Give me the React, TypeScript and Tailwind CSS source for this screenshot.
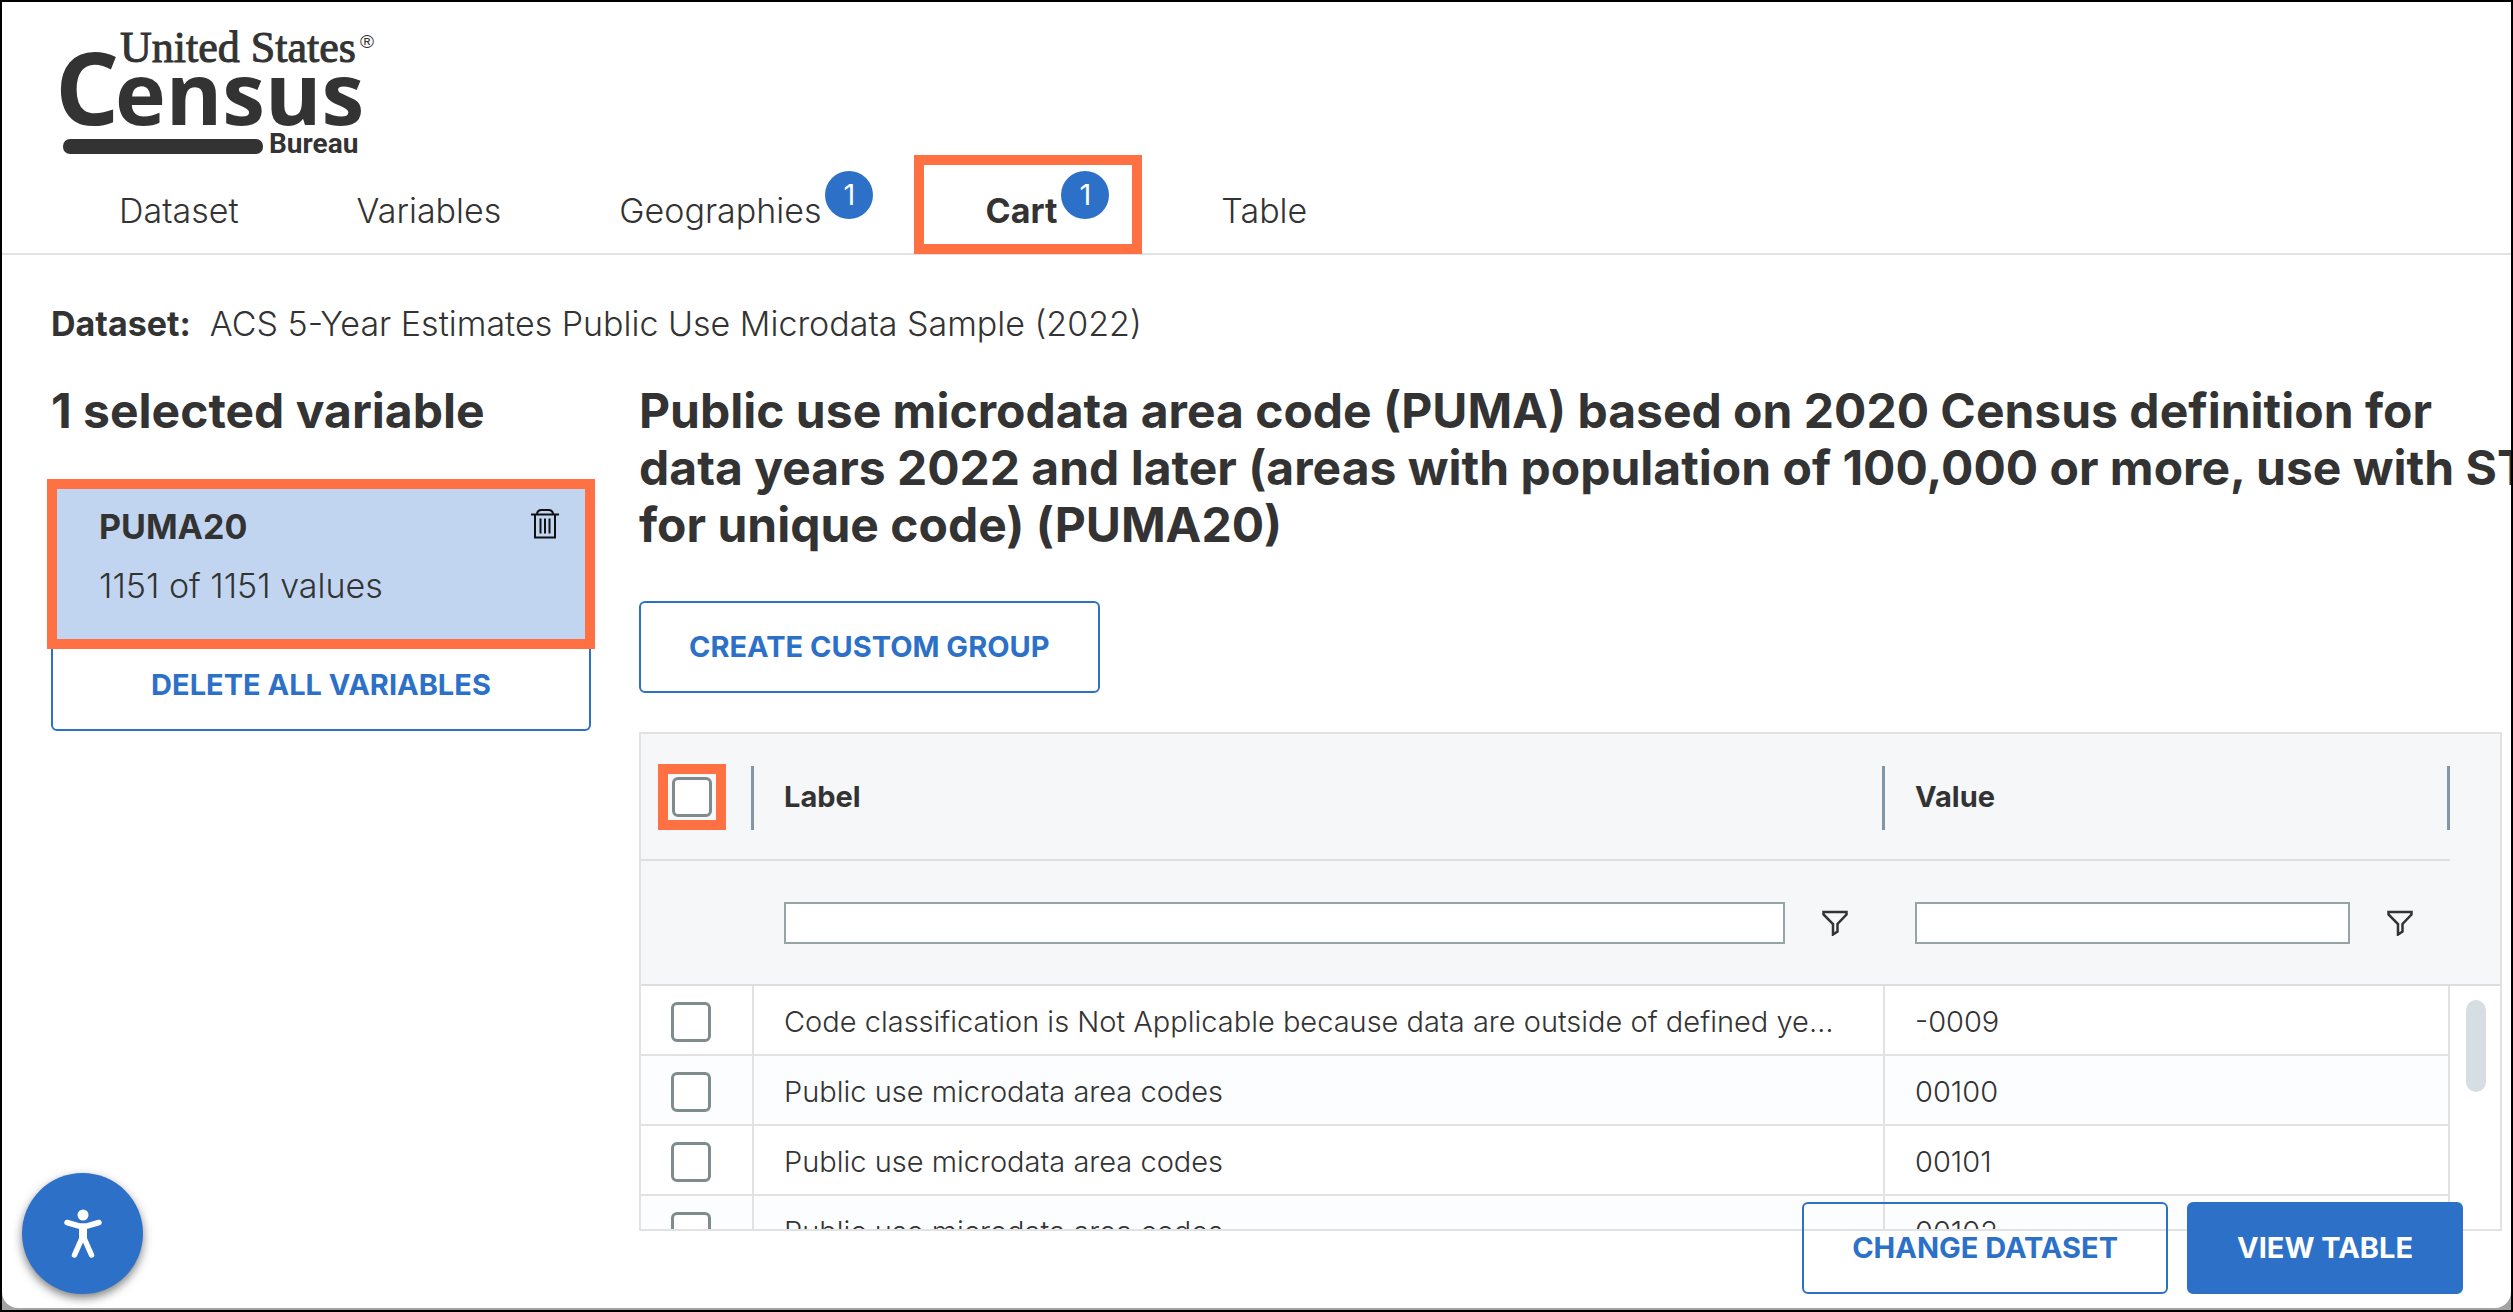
import { useState } from "react";

const tabs = [
  { name: "Dataset" },
  { name: "Variables" },
  { name: "Geographies", count: 1 },
  { name: "Cart", count: 1, active: true },
  { name: "Table" },
];

const rows = [
  {
    label: "Code classification is Not Applicable because data are outside of defined years and",
    value: "-0009",
  },
  { label: "Public use microdata area codes", value: "00100" },
  { label: "Public use microdata area codes", value: "00101" },
  { label: "Public use microdata area codes", value: "00102" },
];

function Logo() {
  return (
    <svg width="320" height="130" viewBox="58 28 320 130" fill="#333" role="img" aria-label="United States Census Bureau">
      <text x="120" y="62" fontSize="44" fontFamily="Liberation Serif, serif" stroke="#333" strokeWidth="1">
        United States
      </text>
      <text x="360" y="48" fontSize="19" fontFamily="Liberation Sans, sans-serif">®</text>
      <text x="55" y="125" fontSize="101" fontWeight="700" fontFamily="Open Sans, sans-serif">C</text>
      <text x="115" y="125" fontSize="86" fontWeight="700" fontFamily="Open Sans, sans-serif">ensus</text>
      <rect x="63" y="139" width="200" height="15" rx="7" />
      <text x="269" y="153" fontSize="28" fontWeight="700" fontFamily="Roboto, sans-serif">Bureau</text>
    </svg>
  );
}

function TrashIcon() {
  return (
    <svg width="28" height="30" viewBox="0 0 28 30" fill="none" stroke="#111" strokeWidth="2">
      <path d="M0 5.500h28M6 5.500C6 2.500 8 1 10.500 1h7C20 1 22 2.500 22 5.500M4 5.500V28.500h20V5.500M9.500 9.500v15M14 9.500v15M18.500 9.500v15" />
    </svg>
  );
}

function FilterIcon() {
  return (
    <svg width="26" height="26" viewBox="0 0 26 26" fill="none" stroke="#333" strokeWidth="2.500">
      <path d="M1.500 2h23v2.500l-9 9.500v7.500l-4.500 3V14l-9.500-9.500z" />
    </svg>
  );
}

function Checkbox({ label }: { label: string }) {
  return (
    <input
      type="checkbox"
      aria-label={label}
      className="block w-10 h-10 appearance-none rounded-md border-[3px] border-[#7f8c8d] bg-white checked:bg-[#2c71c7]"
    />
  );
}

function ColumnFilter({ label }: { label: string }) {
  return (
    <div className="flex items-center gap-[37px] pl-[30px] pr-[37px]">
      <input
        type="text"
        aria-label={label}
        className="min-w-0 flex-1 h-[42px] border-2 border-[#95a5a6] bg-white px-2"
      />
      <button aria-label={"Open " + label}>
        <FilterIcon />
      </button>
    </div>
  );
}

function App() {
  const [filters] = useState(["Label filter", "Value filter"]);

  return (
    <div className="h-screen overflow-hidden border-2 border-black bg-[#a3a3a3] font-['Inter',sans-serif] text-[34px] leading-[48px] font-light text-[#333]">
      <div className="relative h-full border-b-2 border-[#a3a3a3] bg-[#a3a3a3]">
        <div className="h-full overflow-hidden rounded-b-2xl bg-white">
          <header className="border-b-2 border-[#e2e2e2]">
            <div className="h-[153px] pt-[26px] pl-14">
              <Logo />
            </div>
            <nav className="flex h-[98px] pl-[58px]">
              {tabs.map((tab) => (
                <a
                  key={tab.name}
                  href="#"
                  className={`relative flex items-start gap-1 px-[59px] pt-4 ${tab.active ? "font-bold" : ""}`}
                >
                  <span className="mt-4">{tab.name}</span>
                  {tab.count && (
                    <span className="-mr-1.5 flex size-12 items-center justify-center rounded-full bg-[#2c71c7] text-[29px] font-normal text-white">
                      {tab.count}
                    </span>
                  )}
                  {tab.active && (
                    <span className="absolute top-0 -bottom-px -left-3 right-5 border-[10px] border-[#ff7043]" />
                  )}
                </a>
              ))}
            </nav>
          </header>

          <p className="mt-[45px] ml-[49px] flex gap-[19px]">
            <b className="font-bold">Dataset:</b>
            <span>ACS 5-Year Estimates Public Use Microdata Sample (2022)</span>
          </p>

          <div className="mt-[34px] flex gap-12 pl-[49px] pr-[9px]">
            <aside className="w-[540px] shrink-0">
              <h2 className="text-[48px] leading-[57px] font-bold">1 selected variable</h2>
              <div className="relative z-10 -mx-1 mt-10 flex h-[170px] items-start justify-between border-[10px] border-[#ff7043] bg-[#c2d5f0] pt-[14px] pr-[26px] pl-[42px]">
                <div>
                  <div className="font-bold">PUMA20</div>
                  <div className="mt-[11px]">1151 of 1151 values</div>
                </div>
                <button aria-label="Delete PUMA20" className="mt-[6px]">
                  <TrashIcon />
                </button>
              </div>
              <button className="-mt-[10px] block h-[92px] w-full rounded-md border-2 border-[#2c71c7] text-[29px] font-bold text-[#2c71c7]">
                DELETE ALL VARIABLES
              </button>
            </aside>

            <main className="min-w-0 flex-1">
              <h1 className="text-[48px] leading-[57px] font-bold whitespace-nowrap">
                Public use microdata area code (PUMA) based on 2020 Census definition for
                <br />
                data years 2022 and later (areas with population of 100,000 or more, use with ST)
                <br />
                for unique code) (PUMA20)
              </h1>
              <button className="mt-12 block h-[92px] rounded-md border-2 border-[#2c71c7] px-12 text-[29px] font-bold text-[#2c71c7]">
                CREATE CUSTOM GROUP
              </button>

              <div className="relative mt-[39px] h-[499px] overflow-hidden border-2 border-[#e2e2e2] text-[29px]">
                <table className="w-full table-fixed border-separate border-spacing-0 text-left">
                  <colgroup>
                    <col className="w-[113px]" />
                    <col />
                    <col className="w-[565px]" />
                    <col className="w-[50px]" />
                  </colgroup>
                  <thead className="bg-[#f5f7f8]">
                    <tr className="h-[127px]">
                      <th className="relative border-b-2 border-[#dcdfe0]">
                        <div className="ml-[17px] flex h-[66px] w-[68px] items-center justify-center border-[10px] border-[#ff7043]">
                          <Checkbox label="Select all" />
                        </div>
                        <span className="absolute top-8 right-0 h-16 w-[3px] bg-[#7f97a6]" />
                      </th>
                      <th className="relative border-b-2 border-[#dcdfe0] pl-[30px] font-bold">
                        Label
                        <span className="absolute top-8 right-0 h-16 w-[3px] bg-[#7f97a6]" />
                      </th>
                      <th className="relative border-b-2 border-[#dcdfe0] pl-[30px] font-bold">
                        Value
                        <span className="absolute top-8 right-0 h-16 w-[3px] bg-[#7f97a6]" />
                      </th>
                      <th></th>
                    </tr>
                    <tr className="h-[125px]">
                      <th className="border-b-2 border-[#dcdfe0]"></th>
                      {filters.map((f) => (
                        <th key={f} className="border-b-2 border-[#dcdfe0]">
                          <ColumnFilter label={f} />
                        </th>
                      ))}
                      <th className="border-b-2 border-[#dcdfe0]"></th>
                    </tr>
                  </thead>
                  <tbody>
                    {rows.map((row) => (
                      <tr key={row.value} className="group h-[70px]">
                        <td className="border-r-2 border-b-2 border-[#e2e2e2] pt-1 pl-[30px] group-even:bg-[#fcfdfe]">
                          <Checkbox label={"Select " + row.value} />
                        </td>
                        <td className="truncate border-r-2 border-b-2 border-[#e2e2e2] pt-1 pr-9 pl-[30px] group-even:bg-[#fcfdfe]">
                          {row.label}
                        </td>
                        <td className="border-r-2 border-b-2 border-[#e2e2e2] px-[30px] pt-1 group-even:bg-[#fcfdfe]">
                          {row.value}
                        </td>
                        <td></td>
                      </tr>
                    ))}
                  </tbody>
                </table>
                {/* scrollbar thumb */}
                <div className="absolute top-[266px] right-[14px] h-[92px] w-5 rounded-full bg-[#d6dee1]" />
              </div>
            </main>
          </div>
        </div>

        {/* floating actions */}
        <div className="absolute right-12 bottom-[14px] flex gap-[19px] text-[29px] font-bold">
          <button className="h-[92px] rounded-md border-2 border-[#2c71c7] px-12 text-[#2c71c7]">
            CHANGE DATASET
          </button>
          <button className="h-[92px] rounded-md border-2 border-[#2c71c7] bg-[#2c71c7] px-12 text-white">
            VIEW TABLE
          </button>
        </div>
        <button
          aria-label="Accessibility"
          className="absolute bottom-[14px] left-5 flex size-[121px] items-center justify-center rounded-full bg-[#2c71c7] shadow-[0_4px_10px_rgba(0,0,0,0.5)]"
        >
          <svg width="38" height="50" viewBox="0 0 38 50" fill="white" stroke="white" strokeLinecap="round" strokeLinejoin="round">
            <circle cx="19" cy="6" r="5.500" stroke="none" />
            <path d="M3 13.500l12 3.500h8l12-3.500" fill="none" strokeWidth="5.500" />
            <path d="M16 17h6v12h-6z" strokeWidth="2" />
            <path d="M18 29l-7.500 17M20 29l7.500 17" fill="none" strokeWidth="5.500" />
          </svg>
        </button>
      </div>
    </div>
  );
}

export default App;
